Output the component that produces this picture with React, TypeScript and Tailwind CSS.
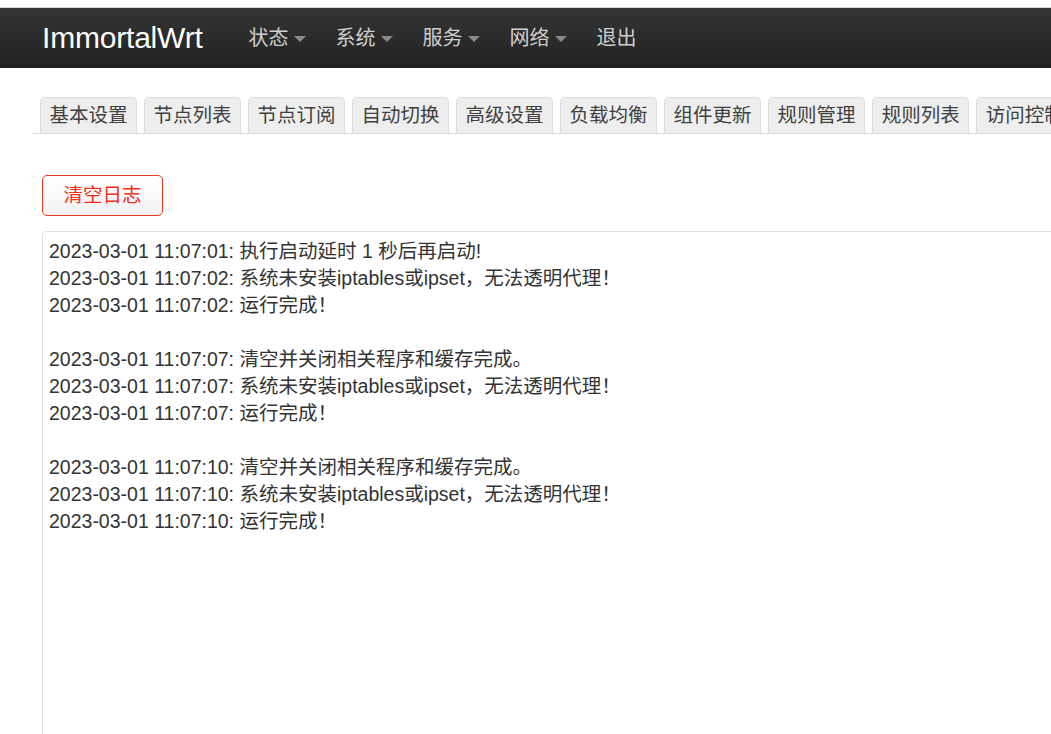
import React from "react";

const tabs = ["基本设置", "节点列表", "节点订阅", "自动切换", "高级设置", "负载均衡", "组件更新", "规则管理", "规则列表", "访问控制"];
const menus = [
  { label: "状态", caret: true },
  { label: "系统", caret: true },
  { label: "服务", caret: true },
  { label: "网络", caret: true },
  { label: "退出", caret: false },
];

const logs = [
  "2023-03-01 11:07:01: 执行启动延时 1 秒后再启动!",
  "2023-03-01 11:07:02: 系统未安装iptables或ipset，无法透明代理！",
  "2023-03-01 11:07:02: 运行完成！",
  "",
  "2023-03-01 11:07:07: 清空并关闭相关程序和缓存完成。",
  "2023-03-01 11:07:07: 系统未安装iptables或ipset，无法透明代理！",
  "2023-03-01 11:07:07: 运行完成！",
  "",
  "2023-03-01 11:07:10: 清空并关闭相关程序和缓存完成。",
  "2023-03-01 11:07:10: 系统未安装iptables或ipset，无法透明代理！",
  "2023-03-01 11:07:10: 运行完成！",
];

export default function App() {
  return (
    <div
      className="w-[1051px] h-[734px] overflow-hidden bg-white"
      style={{ fontFamily: '"Liberation Sans", "Noto Sans CJK SC", Arial, sans-serif' }}
    >
      <div className="h-[7px] bg-white" />
      <nav className="h-[61px] flex items-center bg-gradient-to-b from-[#343434] to-[#222222] border-t border-[#d8d8d8]">
        <div className="ml-[42px] text-[30px] text-white leading-none tracking-[-0.2px]">ImmortalWrt</div>
        <div className="flex items-center ml-[46px] gap-[30px]">
          {menus.map((m) => (
            <div key={m.label} className="flex items-center text-[20px] text-[#cfcfcf] leading-none">
              <span>{m.label}</span>
              {m.caret && (
                <span className="ml-[5px] mt-[2px] w-0 h-0 border-l-[6px] border-r-[6px] border-t-[6px] border-l-transparent border-r-transparent border-t-[#8a8a8a]" />
              )}
            </div>
          ))}
        </div>
      </nav>

      <div className="mt-[29px] ml-[33px] pl-[7px] border-b border-[#dddddd] flex gap-[7px] whitespace-nowrap">
        {tabs.map((t) => (
          <div
            key={t}
            className="shrink-0 h-[36px] px-[8.5px] flex items-center bg-[#eeeeee] border border-b-0 border-[#dddddd] rounded-t-[5px] text-[19.5px] text-[#404040] leading-none"
          >
            {t}
          </div>
        ))}
      </div>

      <div className="mt-[41px] ml-[42px]">
        <div className="w-[121px] h-[41px] flex items-center justify-center border border-[#e8361e] rounded-[5px] bg-gradient-to-b from-white to-[#f2f2f2] text-[19.5px] text-[#f0301a] leading-none">
          清空日志
        </div>
      </div>

      <div className="mt-[15px] ml-[42px] w-[1100px] h-[600px] border border-[#dddddd] rounded-[4px] pt-[6px] pl-[6px]">
        {logs.map((l, i) => (
          <div key={i} className="h-[27px] leading-[27px] text-[19.5px] text-[#333333] whitespace-nowrap">
            {l}
          </div>
        ))}
      </div>
    </div>
  );
}
